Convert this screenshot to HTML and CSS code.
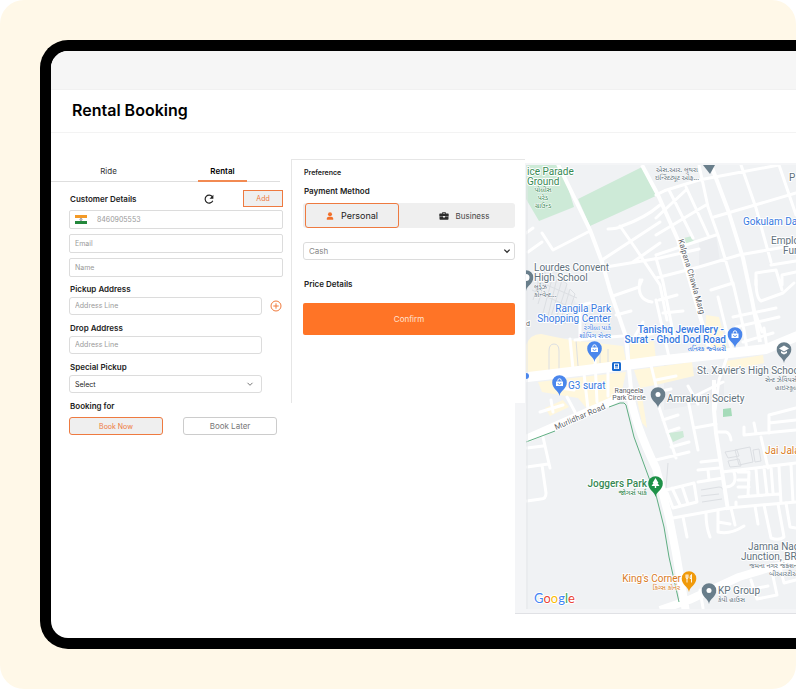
FILE: index.html
```html
<!DOCTYPE html>
<html lang="en">
<head>
<meta charset="utf-8">
<meta name="viewport" content="width=device-width, initial-scale=1">
<title>Rental Booking</title>
<link rel="stylesheet" href="styles.css">
</head>
<body>
<div class="page">
<div class="device">
  <div class="topbar"></div>
  <header class="header"><h1>Rental Booking</h1></header>
  <main class="content">
    <form class="booking">
      <nav class="tabs">
        <a class="tab" href="#ride">Ride</a>
        <a class="tab active" href="#rental">Rental</a>
      </nav>
      <div class="fields">
        <div class="details-head">
          <h2>Customer Details</h2>
          <button class="refresh" type="button" aria-label="Refresh">
            <svg viewBox="0 0 12 12"><path d="M9.300 3.600A4 4 0 1 0 9.800 7.700" fill="none" stroke="#222" stroke-width="1.200"/><path d="M10.400 1.700v4H6.500z" fill="#222"/></svg>
          </button>
          <button class="add" type="button">Add</button>
        </div>
        <div class="stack">
          <div class="phone">
            <svg class="flag" viewBox="0 0 12 9"><path fill="#f39a27" d="M0 0h12v3H0z"/><path fill="#fff" d="M0 3h12v3H0z"/><path fill="#24883c" d="M0 6h12v3H0z"/><circle cx="6" cy="4.500" r="1" fill="none" stroke="#445" stroke-width=".6"/></svg>
            <input type="tel" placeholder="8460905553" aria-label="Phone number">
          </div>
          <input class="box" type="email" placeholder="Email" aria-label="Email">
          <input class="box" type="text" placeholder="Name" aria-label="Name">
        </div>
        <label class="label" for="pickup">Pickup Address</label>
        <div class="address">
          <input class="box" id="pickup" type="text" placeholder="Address Line">
          <button class="plus" type="button" aria-label="Add stop">
            <svg viewBox="0 0 12 12" fill="none" stroke="#f07a3c"><circle cx="6" cy="6" r="5"/><path d="M6 3.300v5.400M3.300 6h5.400"/></svg>
          </button>
        </div>
        <label class="label" for="drop">Drop Address</label>
        <div class="address"><input class="box" id="drop" type="text" placeholder="Address Line"></div>
        <label class="label" for="special">Special Pickup</label>
        <div class="address">
          <div class="picker">
            <select id="special"><option>Select</option></select>
            <svg viewBox="0 0 8 8" fill="none" stroke="#777"><path d="M1.500 2.800L4 5.300l2.500-2.500"/></svg>
          </div>
        </div>
        <h2 class="label">Booking for</h2>
        <div class="choices">
          <button class="choice chosen" type="button">Book Now</button>
          <button class="choice" type="button">Book Later</button>
        </div>
      </div>
    </form>

    <section class="preference">
      <h3>Preference</h3>
      <h2>Payment Method</h2>
      <div class="segment">
        <button class="seg on" type="button">
          <svg viewBox="0 0 8 8" fill="#f2702a"><circle cx="4" cy="2.200" r="2"/><path d="M.8 7.800V6.500Q.8 4.800 2.800 4.800h2.400q2 0 2 1.700v1.300z"/></svg>Personal</button>
        <button class="seg" type="button">
          <svg class="case" viewBox="0 0 10 8" fill="#2c2c2c"><path d="M3 1.500V.9Q3 .2 3.700.2h2.600Q7 .2 7 .9v.6h2q.7 0 .7.700v2.300H6V4H4v.5H.3V2.200q0-.7.7-.7zm.8 0h2.400V1H3.800z"/><path d="M.5 4.800H4v.6h2v-.6h3.500v2.300q0 .7-.7.7H1.200q-.7 0-.7-.7z"/></svg>Business</button>
      </div>
      <div class="picker cash">
        <select aria-label="Payment type"><option>Cash</option></select>
        <svg viewBox="0 0 8 8" fill="none" stroke="#333" stroke-width="1.300"><path d="M1.300 2.600L4 5.300l2.700-2.700"/></svg>
      </div>
      <h2 class="price">Price Details</h2>
      <button class="confirm" type="button">Confirm</button>
    </section>

    <section class="map-frame">
      <svg class="map" viewBox="526 165 270 444" preserveAspectRatio="xMinYMin slice" role="img" aria-label="Map of Surat">
        <defs>
          <path id="pin" d="M0 12C-.7 6.500-7.300 5-7.300-1.500A7.300 7.300 0 0 1 7.300-1.500C7.300 5 .7 6.500 0 12z"/>
          <g id="bag"><path fill="#fff" d="M-3.500-2.500h7v4.500h-7z"/><path d="M-1.700-2.500v-1a1.700 1.700 0 0 1 3.400 0v1" fill="none" stroke="#fff"/><path d="M-1.500-1a1.500 1.500 0 0 0 3 0" fill="none" stroke="#4a86ec" stroke-width=".8"/></g>
          <path id="kalpana" d="M678 240L688 273L702 322"/>
          <path id="murlidhar" d="M556 430L614 405"/>
        </defs>
        <path class="land" d="M526 165h900v444H526z"/>
        <path class="block" d="M526 280l30-12 20 35 40 5 10 30-60 0-40 8zM699 243l17-8 4 26-21 6zM664 365l60 5 0 30-60 10z"/>
        <path class="park" d="M526 165h35l13 42-35 14-13-22zM578 199l64-32 16 28-68 31zM684 238l8-2 2 6-8 2z"/>
        <path class="shops" d="M526 345q4-11 15-11l29 6 53 6 4 20-101 11zM538 382l88-10-6 28-32 10-10-12-36-6zM545 408l18-8 6 7-19 9zM630 343l24-2 2 19-26 3zM706 315l13 2 10 38-24 2zM634 370l58-8 2 14-34 8-20 4zM726 361l37-6 1 8-36 8zM636 395l6 1 5 32-5-5z"/>
        <g class="outline">
          <path d="M533 300l10-35 3 12-8 27M543 313l10-38 4 3-9 38M550 320l12-40 5 4-12 38M560 323l10-34 5 5-10 30M532 290l40 18M535 280l42 18M549 371v-20q0-7 5-7t5 7v18M576 340l2 26M600 350v13M608 349v13M725 452l12-2 2 6-11 2zM728 461l11-2 2 7-11 1zM735 450l15-3 3 15-14 3zM753 450l6-1 2 12-6 1zM701 490l18-3q4 0 5 5M701 496l18-2M702 502l20-3M668 463l-2 25"/>
        </g>
        <g class="minor">
          <path d="M608 229q9 0 14-3Q645 218 660 205M620 226L636 249 660 285 667 320M602 260L660 222M606 267L660 258 699 249M633 262L660 243M528 252L542 242M542 233L553 250 588 232M526 233l7-5"/>
          <path d="M656 195Q664 190 673 188L699 180 779 165M699 165L708 207 718 235 733 285M741 165L756 208 771 262M779 165L796 215M714 217L796 193M656 255L716 235M656 278L699 267 739 255 796 245M656 218L686 190M656 235L706 205M669 190L693 238M686 187L708 235M656 258l7 24 12 60M756 285V273L776 270 782 290M771 265l25-4M782 285v-10l14-3"/>
          <path d="M570 339l3 30M595 360l2 42M575 340l22-2 26-2M580 340v-28q0-8 10-9M613 296l26-9 3-7M640 280q-4 20 12 22M650 361l7 29M616 315l15-4M627 340l30-8M643 322l-8 14M608 371v25M584 374l4 35M540 412l23-7M551 400l2 12M567 397l8 15M560 388l14 2"/>
          <path d="M718 297L728 337 733 353M733 283L744 330 747 350M711 290l22-7M756 280q0 18 5 21L783 293 794 283M733 317L776 308M736 327L779 317M743 342L773 333M755 312l7 20M659 300l18-5M663 313l20-2M656 300L669 357M764 328l3 20M656 380l20-4M657 392l14-3M728 354L719 380 715 410M693 397L723 382M688 386l10 18"/>
          <path d="M543 437L550 468M527 448L543 446M527 467L548 464M542 465L546 493Q546 499 541 499L527 501"/>
          <path d="M688 400L698 450M694 428l22-4M659 407L676 458M656 460L689 452M663 420l15-5M667 432l12-4M671 447l18-5M718 432l8 0q4 1 5 8M744 427v8L796 430M796 408L769 415V433M769 423l27-3M754 423l2 10M761 437L768 468M722 472L796 463M698 470l21-2M698 482l25-4M701 462l18-2M708 470l1 10M666 490L694 483 697 502 673 508zM672 488l8 17M682 486l6 18M673 518L728 508 796 502M734 472q4 14-8 15M738 472h9M738 480h11M738 487h11M749 472l-1 24M756 469l2 25M764 468l3 26M771 467l2 26M779 467l2 36M791 465l2 37M739 497l40-3M736 502v4"/>
          <path d="M683 517l4 20M706 513q0 14 4 24M718 510v22q12 3 26-6M731 508l4 17M718 522l12 2M755 506l3 18M764 505l7 33q8 3 13-1l-6-33M786 503l4 24 6 1M751 580l6 19 20-4-6-28M758 588l10-2M780 567l4 16 12-3M700 590l3 18"/>
        </g>
        <g class="road">
          <path d="M557 162L590 230 602 262 610 290 626 337 632 400M642 165L658 195 678 240 709 347M711 165L728 210 743 258 752 300 760 342M714 380V410L716 433 728 510"/>
        </g>
        <path class="spot" d="M723 409l8-1 1 8-9 1z"/>
        <path class="park" d="M669 433l14-2 1 6-11 5z"/>
        <path class="avenue" d="M526 439L553 427 610 402 632 390M630 394Q635 425 656 468L669 517 676 553 686 612M660 610L689 600 739 577 769 568 796 563"/>
        <path class="artery" d="M520 378L587 370 656 361 766 349 800 335"/>
        <path class="trail" d="M526 442L555 431M609 407L620 403Q625 402 626 405L634 437 649 478 656 495 664 527 669 557 679 602"/>
        <path class="edge" d="M527 165v444"/>
        <g fill="#697e8b">
          <use href="#pin" x="784" y="351"/><use href="#pin" x="658" y="396"/><use href="#pin" x="709" y="592"/><use href="#pin" x="526" y="279"/><path d="M703 165h12l-5 9z"/>
        </g>
        <g fill="#fff"><circle cx="658" cy="394.500" r="2.500"/><circle cx="709" cy="590.500" r="2.500"/><path d="M779 348.500l5-3 5 3-5 3zM781 351l3 1.500 3-1.500v2l-3 1.500-3-1.500zM526 274a3.500 3.500 0 0 1 0 7z"/></g>
        <g fill="#4a86ec"><use href="#pin" x="594.500" y="350"/><use href="#pin" x="559.500" y="384"/><use href="#pin" x="735" y="336"/><circle cx="526" cy="376" r="3"/></g>
        <use href="#bag" x="594.500" y="350"/><use href="#bag" x="559.500" y="384"/><use href="#bag" x="735" y="336"/>
        <rect x="612" y="362" width="9" height="9" rx="1.500" fill="#1769ce"/><path fill="#fff" d="M614 363.500h5v5.500h-5z"/><path fill="#1769ce" d="M615 364.500h3v2h-3zM615 367.500h3v.7h-3z"/>
        <use href="#pin" x="655.500" y="485" fill="#1e9148"/><path fill="#fff" d="M655.500 478l3 5h-1l2 3h-3.300v2h-1.400v-2h-3.300l2-3h-1z"/>
        <use href="#pin" x="689" y="580" fill="#f09a0b"/><path d="M686 574.500v3q0 1 1 1t1-1v-3M687 574.500v8M691.500 582.500v-8q-1.500 1-1.500 4h1.500" fill="none" stroke="#fff" stroke-width=".9"/>
        <g class="place">
          <g class="leaf"><text x="527" y="175">ice Parade</text><text x="527" y="185">Ground</text><g class="gu mid"><text x="543" y="192">પોલીસ</text><text x="543" y="200">પરેડ</text><text x="543" y="208">ગ્રાઉન્ડ</text></g></g>
          <g class="gu mid"><text x="677" y="172">એસ.આર. લુથરા</text><text x="677" y="180">ઇન્સ્ટિટ્યૂટ ઓફ...</text></g>
          <text x="534" y="271">Lourdes Convent</text><text x="534" y="281">High School</text><g class="gu"><text x="534" y="289">લૂર્ડ્ઝ</text><text x="534" y="297">કોન્વેન્ટ...</text></g>
          <text x="789" y="181">P</text><text x="771" y="244">Employment</text><text x="783" y="254">Fund</text><text class="street" x="526" y="326">d</text>
          <g class="blue"><text x="743" y="225">Gokulam Dairy</text><g class="end"><text x="611" y="312">Rangila Park</text><text x="611" y="322">Shopping Center</text></g><g class="gu end"><text x="611" y="330">રંગીલા પાર્ક</text><text x="611" y="338">શોપિંગ સેન્ટર</text></g><text x="568" y="389">G3 surat</text></g>
          <g class="blue end strong"><text x="724" y="333">Tanishq Jewellery -</text><text x="726" y="343">Surat - Ghod Dod Road</text><text class="gu" x="726" y="351">તનિશ્ક જ્વેલરી</text></g>
          <text x="697" y="374">St. Xavier's High School</text><g class="gu"><text x="765" y="382">સેન્ટ ઝેવિયર્સ</text><text x="775" y="390">હાઇસ્કૂલ</text></g>
          <text x="667" y="402">Amrakunj Society</text>
          <g class="mid street"><text x="629" y="393">Rangeela</text><text x="629" y="400">Park Circle</text></g>
          <text class="street along"><textPath href="#kalpana">Kalpana Chawla Marg</textPath></text>
          <text class="street along"><textPath href="#murlidhar">Murlidhar Road</textPath></text>
          <g class="leaf end strong"><text x="647" y="487">Joggers Park</text><text class="gu" x="647" y="495">જોગર્સ પાર્ક</text></g>
          <g class="food"><text x="765" y="454">Jai Jalaram</text><g class="end"><text x="681" y="582">King's Corner</text><text class="gu" x="680" y="590">કિંગ્સ કોર્નર</text></g></g>
          <text x="718" y="594">KP Group</text><text class="gu" x="718" y="602">કેપી હાઉસ</text>
          <text x="748" y="550">Jamna Nagar</text><text x="741" y="560">Junction, BRTS</text><g class="gu"><text x="749" y="568">જમના નગર જંક્શન</text><text x="769" y="576">બીઆરટીએસ</text></g>
        </g>
        <text class="logo" x="534" y="603"><tspan fill="#4285f4">G</tspan><tspan fill="#ea4335">o</tspan><tspan fill="#fbbc05">o</tspan><tspan fill="#4285f4">g</tspan><tspan fill="#34a853">l</tspan><tspan fill="#ea4335">e</tspan></text>
      </svg>
    </section>
  </main>
</div>
</div>
</body>
</html>
```

FILE: styles.css
```css
* { box-sizing: border-box; }
body { margin: 0; background: #fff; color: #222; font-family: Inter, "Liberation Sans", sans-serif; font-size: 8px; }
button, input, select { margin: 0; padding: 0; font-family: inherit; font-size: 7px; color: inherit; }
button { cursor: pointer; }
svg { display: block; }
h1, h2, h3 { margin: 0; }
h2, h3, .label { font-size: 8px; font-weight: 600; line-height: 16px; }

.page { display: flex; min-height: 100vh; padding: 40px 0 40px 40px; background: #fff8e8; border-radius: 24px; overflow: hidden; }
.device { flex: 1; min-width: 0; border: 11px solid #000; border-right: 0; border-radius: 28px 0 0 28px; background: #fff; overflow: hidden; }
.topbar { height: 39px; background: #f6f6f6; border-bottom: 1px solid #f1f1f1; }
.header { padding: 8px 21px 10px; border-bottom: 1px solid #f3f3f3; }
.header h1 { color: #000; font-size: 16px; font-weight: 600; line-height: 24px; }
.content { display: grid; grid-template-columns: 240px 234px minmax(0, 1fr); align-items: start; }

/* Booking form */
.tabs { display: flex; gap: 65px; margin-right: 11px; padding: 27px 0 0 33px; border-bottom: 1px solid #dedede; }
.tab { width: 49px; margin-bottom: -1px; padding: 4px 0 2px; border-bottom: 2px solid transparent; color: #333; line-height: 14px; text-align: center; text-decoration: none; }
.tab.active { border-color: #f28a52; color: #000; font-weight: 600; }
.fields { padding: 8px 8px 0 18px; }
.fields h2, .label { padding-left: 1px; }
.details-head { display: flex; align-items: center; margin-bottom: 3px; }
.refresh { width: 12px; height: 12px; margin: 0 28px 0 auto; border: 0; background: none; }
.add { width: 40px; height: 17px; border: 1px solid #ee7a40; background: #efefef; color: #ee7a40; }
.stack { display: grid; gap: 5px; margin-bottom: 4px; }
.box, .phone { width: 100%; height: 19px; border: 1px solid #dcdcdc; border-radius: 2px; background: #fff; }
.box { padding: 0 5px 1px; }
.phone { display: flex; align-items: center; gap: 10px; padding: 0 5px 1px; }
.phone input { flex: 1; min-width: 0; border: 0; outline: 0; background: none; }
.flag { width: 12px; height: 9px; }
::placeholder { color: #999; opacity: 1; }
.label { display: block; }
.address { display: grid; grid-template-columns: minmax(0, 1fr) 12px; gap: 8px; align-items: center; margin: 0 1px 5px 0; }
.address .box { height: 18px; border-radius: 3px; }
.plus { width: 12px; height: 12px; border: 0; background: none; }
.picker { display: grid; grid-template-columns: minmax(0, 1fr) 16px; align-items: center; }
.picker select { grid-area: 1 / 1 / 2 / 3; width: 100%; height: 18px; padding: 0 5px; border: 1px solid #dcdcdc; border-radius: 3px; background: #fff; appearance: none; }
.picker svg { grid-area: 1 / 2; width: 8px; height: 8px; pointer-events: none; }
.cash svg { justify-self: center; }
.choices { display: grid; grid-template-columns: 1fr 1fr; gap: 20px; margin: 3px 6px 0 0; }
.choice { height: 18px; border: 1px solid #ccc; border-radius: 3px; background: #fff; color: #777; font-size: 8px; }
.choice.chosen { border-color: #ee7a40; background: #efefef; color: #ee7a40; font-size: 7px; }

/* Payment preferences */
.preference { position: relative; z-index: 1; margin-top: 26px; padding: 4px 10px 68px 11px; border: solid #e6e6e6; border-width: 1px 0 0 1px; background: #fff; }
.preference h3 { font-size: 7px; }
.preference h3, .preference h2 { padding-left: 1px; line-height: 18px; }
.segment { display: grid; grid-template-columns: 94px 1fr; margin: 3px 0 14px; padding-left: 2px; border-radius: 3px; background: #efefef; }
.seg { display: flex; align-items: center; justify-content: center; gap: 7px; height: 25px; padding-left: 14px; border: 1px solid transparent; border-radius: 3px; background: none; color: #444; font-size: 8px; }
.seg.on { padding: 0; border-color: #ee7a40; color: #222; font-size: 9px; }
.seg svg { width: 8px; height: 8px; }
.seg .case { width: 10px; }
.cash select { color: #888; font-size: 8px; }
.price { margin: 15px 0 10px; }
.confirm { width: 100%; height: 32px; border: 0; border-radius: 2px; background: #ff7426; color: #ffe3d2; font-size: 8px; }

/* Map */
.map-frame { margin: 30px 0 0 -10px; padding: 2px 0 4px 11px; border-bottom: 1px solid #e0e1e5; background: #f4f5f7; }
.map { width: 100%; height: 444px; }
.land { fill: #f0f2f4; }
.block { fill: #ebedf0; }
.park { fill: #cdead7; }
.spot { fill: #a5dbb9; }
.shops { fill: #fff7dc; }
.outline, .minor, .road, .avenue, .artery, .trail, .edge { fill: none; stroke-linejoin: round; }
.outline { stroke: #dcdfe3; stroke-width: 1; }
.minor, .road, .avenue, .artery { stroke: #fff; }
.minor { stroke-width: 3; stroke-linecap: round; }
.road { stroke-width: 4; }
.avenue { stroke-width: 8; }
.artery { stroke-width: 10; }
.trail { stroke: #5fae82; stroke-width: 1; }
.edge { stroke: #e4e6e9; stroke-width: 1; }
.place { font-family: Roboto, sans-serif; font-size: 10px; fill: #61717c; stroke: #fff; stroke-width: 2px; stroke-linejoin: round; paint-order: stroke; }
.gu { font-family: "Noto Sans Gujarati", "Noto Sans", sans-serif; font-size: 7px; stroke-width: 1px; }
.mid { text-anchor: middle; }
.end { text-anchor: end; }
.blue { fill: #387adf; }
.leaf { fill: #368953; }
.food { fill: #d97b24; }
.strong { font-weight: 500; }
.street { font-size: 7px; fill: #5d6166; }
.along { font-size: 8px; }
.logo { font-family: Lato, sans-serif; font-size: 13px; stroke: #fff; stroke-width: 2px; paint-order: stroke; }
```
